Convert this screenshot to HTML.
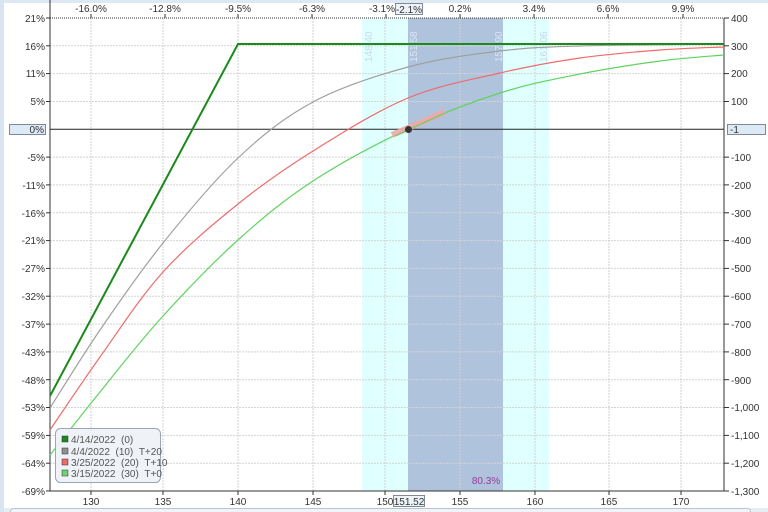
<!DOCTYPE html>
<html><head><meta charset="utf-8"><style>
body{margin:0;width:768px;height:512px;overflow:hidden;background:#fff;font-family:"Liberation Sans",sans-serif;}
svg{display:block}
text{font-family:"Liberation Sans",sans-serif;font-size:10px;fill:#333}
</style></head><body>
<svg width="768" height="512" viewBox="0 0 768 512">
<rect x="0" y="0" width="768" height="512" fill="#fff"/>
<rect x="0" y="0" width="4" height="512" fill="#d8e4f0"/>
<rect x="4" y="0" width="764" height="3" fill="#dde8f3"/>
<rect x="362" y="18" width="187" height="473" fill="#e0ffff"/>
<rect x="408" y="18" width="95" height="473" fill="#afc3dd"/>
<g stroke="#d4d4d4" stroke-width="1" stroke-dasharray="2,1">
<line x1="50" x2="724" y1="45.8" y2="45.8"/><line x1="50" x2="724" y1="73.6" y2="73.6"/><line x1="50" x2="724" y1="101.5" y2="101.5"/>
<line x1="50" x2="724" y1="157.1" y2="157.1"/><line x1="50" x2="724" y1="184.9" y2="184.9"/><line x1="50" x2="724" y1="212.8" y2="212.8"/>
<line x1="50" x2="724" y1="240.6" y2="240.6"/><line x1="50" x2="724" y1="268.4" y2="268.4"/><line x1="50" x2="724" y1="296.2" y2="296.2"/>
<line x1="50" x2="724" y1="324.1" y2="324.1"/><line x1="50" x2="724" y1="351.9" y2="351.9"/><line x1="50" x2="724" y1="379.7" y2="379.7"/>
<line x1="50" x2="724" y1="407.5" y2="407.5"/><line x1="50" x2="724" y1="435.4" y2="435.4"/><line x1="50" x2="724" y1="463.2" y2="463.2"/>
</g>
<g stroke="#d0d0d0" stroke-width="1" stroke-dasharray="2,1">
<line x1="91" x2="91" y1="18" y2="491"/><line x1="163" x2="163" y1="18" y2="491"/><line x1="238" x2="238" y1="18" y2="491"/>
<line x1="313" x2="313" y1="18" y2="491"/><line x1="385" x2="385" y1="18" y2="491"/><line x1="460" x2="460" y1="18" y2="491"/>
<line x1="535" x2="535" y1="18" y2="491"/><line x1="609" x2="609" y1="18" y2="491"/><line x1="681" x2="681" y1="18" y2="491"/>
</g>
<g font-size="10">
<text x="0" y="0" transform="translate(372,62) rotate(-90)" style="fill:#c8d8e8">148.40</text>
<text x="0" y="0" transform="translate(417,62) rotate(-90)" style="fill:#dde6f2">151.58</text>
<text x="0" y="0" transform="translate(502,62) rotate(-90)" style="fill:#dde6f2">157.90</text>
<text x="0" y="0" transform="translate(547,62) rotate(-90)" style="fill:#c8d8e8">161.06</text>
</g>
<line x1="50" x2="724" y1="18" y2="18" stroke="#333" stroke-dasharray="1,1"/>
<line x1="50" x2="50" y1="0" y2="491" stroke="#333"/>
<line x1="724" x2="724" y1="18" y2="491" stroke="#333"/>
<line x1="50" x2="724" y1="491" y2="491" stroke="#333"/>
<line x1="50" x2="724" y1="129.3" y2="129.3" stroke="#222"/>
<path id="cg" fill="none" stroke="#5fd35f" stroke-width="1.2" d=""/>
<path id="cr" fill="none" stroke="#ef6b6b" stroke-width="1.2" d=""/>
<path id="ca" fill="none" stroke="#a0a0a0" stroke-width="1.2" d=""/>
<polyline fill="none" stroke="#1a8a1a" stroke-width="2" points="50,396 238,44 724,44"/>
<line x1="392" y1="135" x2="445" y2="112" stroke="#f2a8a8" stroke-width="6" opacity="0.9"/>
<line x1="395" y1="136" x2="445" y2="113" stroke="#5fd35f" stroke-width="1"/>
<circle cx="408.5" cy="129.5" r="3.5" fill="#333"/>
<g stroke="#333">
<line x1="724" x2="729" y1="18" y2="18"/><line x1="724" x2="729" y1="45.8" y2="45.8"/><line x1="724" x2="729" y1="73.6" y2="73.6"/><line x1="724" x2="729" y1="101.5" y2="101.5"/>
<line x1="724" x2="729" y1="157.1" y2="157.1"/><line x1="724" x2="729" y1="184.9" y2="184.9"/><line x1="724" x2="729" y1="212.8" y2="212.8"/><line x1="724" x2="729" y1="240.6" y2="240.6"/>
<line x1="724" x2="729" y1="268.4" y2="268.4"/><line x1="724" x2="729" y1="296.2" y2="296.2"/><line x1="724" x2="729" y1="324.1" y2="324.1"/><line x1="724" x2="729" y1="351.9" y2="351.9"/>
<line x1="724" x2="729" y1="379.7" y2="379.7"/><line x1="724" x2="729" y1="407.5" y2="407.5"/><line x1="724" x2="729" y1="435.4" y2="435.4"/><line x1="724" x2="729" y1="463.2" y2="463.2"/><line x1="724" x2="729" y1="491" y2="491"/>
<line x1="46" x2="50" y1="18" y2="18"/><line x1="46" x2="50" y1="45.8" y2="45.8"/><line x1="46" x2="50" y1="73.6" y2="73.6"/><line x1="46" x2="50" y1="101.5" y2="101.5"/>
<line x1="46" x2="50" y1="157.1" y2="157.1"/><line x1="46" x2="50" y1="184.9" y2="184.9"/><line x1="46" x2="50" y1="212.8" y2="212.8"/><line x1="46" x2="50" y1="240.6" y2="240.6"/>
<line x1="46" x2="50" y1="268.4" y2="268.4"/><line x1="46" x2="50" y1="296.2" y2="296.2"/><line x1="46" x2="50" y1="324.1" y2="324.1"/><line x1="46" x2="50" y1="351.9" y2="351.9"/>
<line x1="46" x2="50" y1="379.7" y2="379.7"/><line x1="46" x2="50" y1="407.5" y2="407.5"/><line x1="46" x2="50" y1="435.4" y2="435.4"/><line x1="46" x2="50" y1="463.2" y2="463.2"/><line x1="46" x2="50" y1="491" y2="491"/>
<line x1="91" x2="91" y1="491" y2="495"/><line x1="163" x2="163" y1="491" y2="495"/><line x1="238" x2="238" y1="491" y2="495"/><line x1="313" x2="313" y1="491" y2="495"/><line x1="385" x2="385" y1="491" y2="495"/><line x1="460" x2="460" y1="491" y2="495"/><line x1="535" x2="535" y1="491" y2="495"/><line x1="609" x2="609" y1="491" y2="495"/><line x1="681" x2="681" y1="491" y2="495"/>
<line x1="91" x2="91" y1="14" y2="18"/><line x1="165" x2="165" y1="14" y2="18"/><line x1="238" x2="238" y1="14" y2="18"/><line x1="312" x2="312" y1="14" y2="18"/><line x1="386" x2="386" y1="14" y2="18"/><line x1="460" x2="460" y1="14" y2="18"/><line x1="534" x2="534" y1="14" y2="18"/><line x1="608" x2="608" y1="14" y2="18"/><line x1="683" x2="683" y1="14" y2="18"/>
</g>
<g text-anchor="end">
<text x="45" y="22">21%</text><text x="45" y="50">16%</text><text x="45" y="77">11%</text><text x="45" y="105">5%</text>
<text x="45" y="161">-5%</text><text x="45" y="189">-11%</text><text x="45" y="217">-16%</text><text x="45" y="244">-21%</text>
<text x="45" y="272">-27%</text><text x="45" y="300">-32%</text><text x="45" y="328">-37%</text><text x="45" y="356">-43%</text>
<text x="45" y="384">-48%</text><text x="45" y="411">-53%</text><text x="45" y="439">-59%</text><text x="45" y="467">-64%</text><text x="45" y="495">-69%</text>
</g>
<rect x="9.5" y="124.5" width="36" height="10" fill="#dde9f5" stroke="#7a8a9a"/>
<text x="44" y="133" text-anchor="end">0%</text>
<g>
<text x="731" y="22">400</text><text x="731" y="50">300</text><text x="731" y="77">200</text><text x="731" y="105">100</text>
<text x="731" y="161">-100</text><text x="731" y="189">-200</text><text x="731" y="217">-300</text><text x="731" y="244">-400</text>
<text x="731" y="272">-500</text><text x="731" y="300">-600</text><text x="731" y="328">-700</text><text x="731" y="356">-800</text>
<text x="731" y="384">-900</text><text x="731" y="411">-1,000</text><text x="731" y="439">-1,100</text><text x="731" y="467">-1,200</text><text x="731" y="495">-1,300</text>
</g>
<rect x="727.5" y="124.5" width="38" height="10" fill="#dde9f5" stroke="#7a8a9a"/>
<text x="730" y="133">-1</text>
<g text-anchor="middle">
<text x="91" y="12">-16.0%</text><text x="165" y="12">-12.8%</text><text x="238" y="12">-9.5%</text><text x="312" y="12">-6.3%</text>
<text x="382" y="12">-3.1%</text><text x="460" y="12">0.2%</text><text x="534" y="12">3.4%</text><text x="608" y="12">6.6%</text><text x="683" y="12">9.9%</text>
</g>
<rect x="395.5" y="3.5" width="27" height="11" fill="#eef3f8" stroke="#7a8a9a"/>
<text x="409" y="13" text-anchor="middle">-2.1%</text>
<g text-anchor="middle">
<text x="91" y="505">130</text><text x="163" y="505">135</text><text x="238" y="505">140</text><text x="313" y="505">145</text>
<text x="385" y="505">150</text><text x="460" y="505">155</text><text x="535" y="505">160</text><text x="609" y="505">165</text><text x="681" y="505">170</text>
</g>
<rect x="393.5" y="495.5" width="31" height="11" fill="#eef3f8" stroke="#7a8a9a"/>
<text x="409" y="505" text-anchor="middle">151.52</text>
<text x="486" y="484" text-anchor="middle" style="fill:#9a3a9a">80.3%</text>
<rect x="4" y="508" width="764" height="4" fill="#e4ecf4"/>
<rect x="10.5" y="508.5" width="740" height="6" rx="3" fill="#f0f4f8" stroke="#b8c4d0"/>
<rect x="55.5" y="428.5" width="105" height="54" rx="5" fill="#eef1f5" fill-opacity="0.92" stroke="#9aa6b2"/>
<rect x="62" y="436" width="6" height="6" fill="#1a8a1a" stroke="#333" stroke-width="0.5"/>
<rect x="62" y="448" width="6" height="6" fill="#909090" stroke="#333" stroke-width="0.5"/>
<rect x="62" y="459" width="6" height="6" fill="#ef6b6b" stroke="#333" stroke-width="0.5"/>
<rect x="62" y="470" width="6" height="6" fill="#6fd36f" stroke="#333" stroke-width="0.5"/>
<g style="font-size:10px">
<text x="71" y="443" style="fill:#555">4/14/2022&#160;&#160;(0)</text>
<text x="71" y="455" style="fill:#555">4/4/2022&#160;&#160;(10)&#160;&#160;T+20</text>
<text x="71" y="466" style="fill:#555">3/25/2022&#160;&#160;(20)&#160;&#160;T+10</text>
<text x="71" y="477" style="fill:#555">3/15/2022&#160;&#160;(30)&#160;&#160;T+0</text>
</g>
</svg>
<script>
function cr(p){var d="M"+p[0][0]+","+p[0][1];for(var i=0;i<p.length-1;i++){var a=p[i-1]||p[i],b=p[i],c=p[i+1],e=p[i+2]||c;
d+=" C"+(b[0]+(c[0]-a[0])/6).toFixed(1)+","+(b[1]+(c[1]-a[1])/6).toFixed(1)+" "+(c[0]-(e[0]-b[0])/6).toFixed(1)+","+(c[1]-(e[1]-b[1])/6).toFixed(1)+" "+c[0]+","+c[1];}return d;}
document.getElementById("cg").setAttribute("d",cr([[50,455],[100,392],[163,316],[238,240],[313,181],[408,129],[500,93],[580,74],[660,61],[724,55]]));
document.getElementById("cr").setAttribute("d",cr([[50,430],[100,357],[163,272],[238,204],[313,151],[408,98],[500,73],[580,58],[660,50],[724,47]]));
document.getElementById("ca").setAttribute("d",cr([[50,408],[100,330],[163,243],[238,158],[313,102],[408,67],[500,51],[580,46],[724,44]]));
</script>
</body></html>
